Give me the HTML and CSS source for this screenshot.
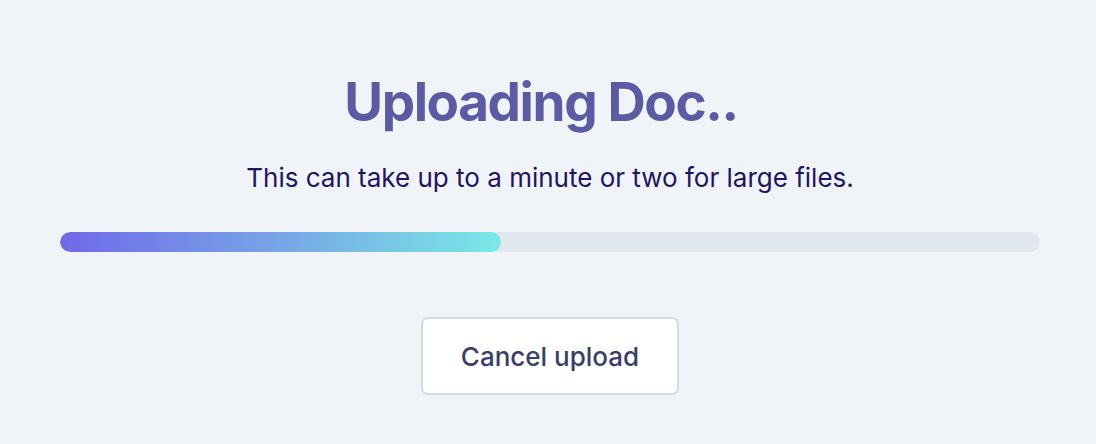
FILE: index.html
```html
<!DOCTYPE html>
<html lang="en">
<head>
    <meta charset="UTF-8">
    <title>Uploading</title>
    <link rel="stylesheet" href="styles.css">
</head>
<body>
    <div class="upload">
        <h1 class="upload-title">Uploading Doc..</h1>
        <p class="upload-note">This can take up to a minute or two for large files.</p>
        <div class="progress">
            <div class="progress-fill" style="width: 45%"></div>
        </div>
        <button class="cancel-btn" type="button">Cancel upload</button>
    </div>
</body>
</html>
```

FILE: styles.css
```css
body {
    margin: 0;
    padding: 0;
    background-color: #f0f3f8;
    font-family: Inter, "Noto Sans", sans-serif;
}
.upload {
    display: flex;
    flex-direction: column;
    align-items: center;
    padding: 70px 56px 0 60px;
}
.upload-title {
    margin: 0 18px 0 0;
    font-size: 53px;
    line-height: 64px;
    font-weight: 700;
    color: #5b5aa5;
    letter-spacing: -1.4px;
}
.upload-note {
    margin: 28px 0 0;
    font-size: 26px;
    line-height: 32px;
    color: #1f1466;
}
.progress {
    align-self: stretch;
    height: 20px;
    margin-top: 38px;
    background: #e1e7ef;
    border-radius: 10px;
    overflow: hidden;
}
.progress-fill {
    height: 100%;
    border-radius: 10px;
    background: linear-gradient(90deg, #7068e9 0%, #77a6e6 50%, #79e9e7 100%);
}
.cancel-btn {
    margin-top: 65px;
    width: 258px;
    height: 78px;
    background: #fff;
    border: 2px solid #d5dae4;
    border-radius: 7px;
    font-family: inherit;
    font-size: 26px;
    font-weight: 500;
    color: #3b3d6b;
    cursor: pointer;
}
```
